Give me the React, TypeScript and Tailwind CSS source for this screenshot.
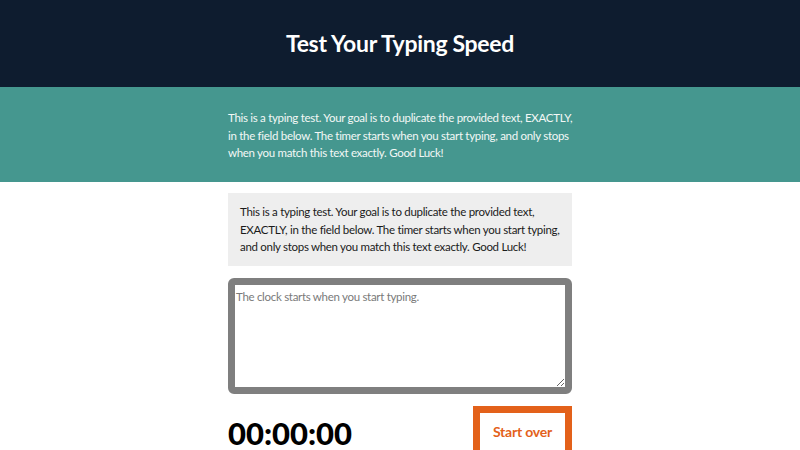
export default function App() {
  const intro =
    "This is a typing test. Your goal is to duplicate the provided text, EXACTLY, in the field below. The timer starts when you start typing, and only stops when you match this text exactly. Good Luck!"

  return (
    <div className="h-[450px] overflow-hidden bg-white font-['Lato','Liberation_Sans',sans-serif]">
      {/* Header */}
      <header className="flex h-[87px] items-center justify-center bg-[#0e1c2f]">
        <h1 className="text-[23px] font-bold tracking-[-0.3px] text-white">Test Your Typing Speed</h1>
      </header>

      {/* Intro band */}
      <section className="h-[95px] bg-[#45978f] pt-[22px]">
        <div className="mx-auto w-[344px]">
          <p className="w-[350px] text-[11.5px] leading-[17.5px] tracking-[-0.3px] text-[#f3f7f6]">{intro}</p>
        </div>
      </section>

      <main className="mx-auto w-[344px] pt-[11px]">
        <div className="bg-[#eeeeee] px-[12px] py-[10px]">
          <p className="text-[11.5px] leading-[17.5px] tracking-[-0.3px] text-[#1b1b1b]">{intro}</p>
        </div>

        <textarea
          placeholder="The clock starts when you start typing."
          className="mt-[12px] block h-[116px] w-full resize-y rounded-[6px] border-[7px] border-[#7f7f7f] px-[1px] py-[3px] text-[11.5px] tracking-[-0.3px] text-[#333] outline-none placeholder:text-[#7a7a7a]"
        />

        <div className="mt-[12px] flex items-start justify-between">
          <div className="pt-[5px] text-[31px] font-black leading-[44px] text-black">00:00:00</div>
          <button className="h-[58px] w-[99px] border-[7px] border-[#e3611a] bg-white pb-[7px] text-[14px] font-bold tracking-[-0.2px] text-[#e3611a]">
            Start over
          </button>
        </div>
      </main>
    </div>
  )
}
